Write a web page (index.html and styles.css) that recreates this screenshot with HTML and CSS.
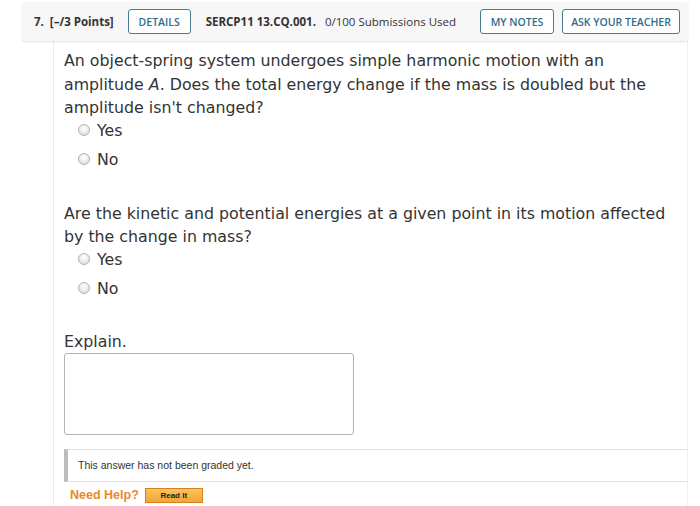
FILE: index.html
```html
<!DOCTYPE html>
<html>
<head>
<meta charset="utf-8">
<link rel="stylesheet" href="styles.css">
</head>
<body>
<div class="page">
  <div class="qhead">
    <span class="qnum">7.</span>
    <span class="pts">[–/3 Points]</span>
    <span class="btn btn-details">DETAILS</span>
    <span class="code">SERCP11 13.CQ.001.</span>
    <span class="subs">0/100 Submissions Used</span>
    <span class="spacer"></span>
    <span class="btn btn-notes">MY NOTES</span>
    <span class="btn btn-ask">ASK YOUR TEACHER</span>
  </div>
  <div class="qbody">
    <p class="qtext">An object-spring system undergoes simple harmonic motion with an amplitude <i>A</i>. Does the total energy change if the mass is doubled but the amplitude isn't changed?</p>
    <div class="opts">
      <div class="opt"><span class="radio"></span>Yes</div>
      <div class="opt"><span class="radio"></span>No</div>
    </div>
    <p class="qtext q2">Are the kinetic and potential energies at a given point in its motion affected by the change in mass?</p>
    <div class="opts">
      <div class="opt"><span class="radio"></span>Yes</div>
      <div class="opt"><span class="radio"></span>No</div>
    </div>
    <p class="explain">Explain.</p>
    <div class="tarea"></div>
    <div class="graded">This answer has not been graded yet.</div>
    <div class="help">
      <span class="needhelp">Need Help?</span>
      <span class="readit">Read It</span>
    </div>
  </div>
</div>
</body>
</html>
```
FILE: styles.css
```css
html, body {
  margin: 0;
  padding: 0;
  background: #fff;
}
.page {
  width: 700px;
  height: 506px;
  overflow: hidden;
  padding-top: 2px;
  box-sizing: border-box;
}
.qhead {
  margin-left: 22px;
  width: 666px;
  height: 39px;
  box-sizing: border-box;
  background: #f7f7f7;
  border-radius: 3px;
  box-shadow: 0 1px 2px rgba(0,0,0,0.12);
  display: flex;
  align-items: center;
  padding: 0 8px 0 12px;
  font-family: "Open Sans", sans-serif;
  font-size: 11.5px;
  color: #333;
  position: relative;
  z-index: 1;
}
.qnum {
  font-weight: 700;
  margin-right: 6px;
}
.pts {
  font-weight: 700;
  margin-right: 14px;
}
.btn {
  display: inline-flex;
  align-items: center;
  justify-content: center;
  height: 25px;
  box-sizing: border-box;
  border: 1px solid #4a7b93;
  border-radius: 3px;
  background: #fff;
  color: #2f6c8c;
  font-weight: 600;
  font-size: 10.5px;
}
.btn-details {
  width: 63px;
  margin-right: 15px;
}
.code {
  font-weight: 700;
  margin-right: 9px;
}
.subs {
  font-weight: 400;
}
.spacer {
  flex: 1;
}
.btn-notes {
  width: 74px;
  margin-right: 8px;
}
.btn-ask {
  width: 118px;
}
.qbody {
  margin-left: 53px;
  width: 635px;
  height: 470px;
  box-sizing: border-box;
  border-left: 1px solid #ececec;
  border-right: 1px solid #f0f0f0;
  padding: 8px 0 0 10px;
  font-family: "DejaVu Sans", Verdana, sans-serif;
  font-size: 15.8px;
  color: #333;
}
.qtext {
  margin: 0;
  max-width: 610px;
  line-height: 23.5px;
}
.q2 {
  margin-top: 31px;
}
.opts {
  margin-top: -1px;
  padding-left: 14px;
  display: flex;
  flex-direction: column;
  gap: 6px;
}
.opt {
  display: flex;
  align-items: center;
  height: 23px;
}
.radio {
  width: 10px;
  height: 10px;
  border-radius: 50%;
  border: 1px solid #b3b3b3;
  background: radial-gradient(circle at 50% 35%, #ffffff 0%, #f0f0f0 40%, #d4d4d4 100%);
  margin-right: 7px;
  flex: none;
}
.explain {
  margin: 30px 0 0 0;
  line-height: 23px;
}
.tarea {
  margin-top: 0;
  width: 290px;
  height: 82px;
  box-sizing: border-box;
  border: 1px solid #b4b4b4;
  border-radius: 3px;
}
.graded {
  margin-top: 14px;
  height: 33px;
  box-sizing: border-box;
  border-top: 1px solid #e0e0e0;
  border-bottom: 1px solid #e0e0e0;
  border-left: 4px solid #bcbcbc;
  padding-left: 10px;
  display: flex;
  align-items: center;
  font-family: "Liberation Sans", Arial, sans-serif;
  font-size: 10.5px;
  color: #333;
}
.help {
  display: flex;
  align-items: center;
  margin-top: 6px;
  padding-left: 6px;
}
.needhelp {
  font-family: "Liberation Sans", Arial, sans-serif;
  font-weight: 700;
  font-size: 12.5px;
  color: #e8892c;
  margin-right: 6px;
}
.readit {
  display: inline-flex;
  align-items: center;
  justify-content: center;
  width: 58px;
  height: 15px;
  box-sizing: border-box;
  border: 1px solid #d4821f;
  background: linear-gradient(#fbc25a, #f2a53a);
  font-family: "Liberation Sans", Arial, sans-serif;
  font-weight: 700;
  font-size: 8px;
  color: #222;
}
```
